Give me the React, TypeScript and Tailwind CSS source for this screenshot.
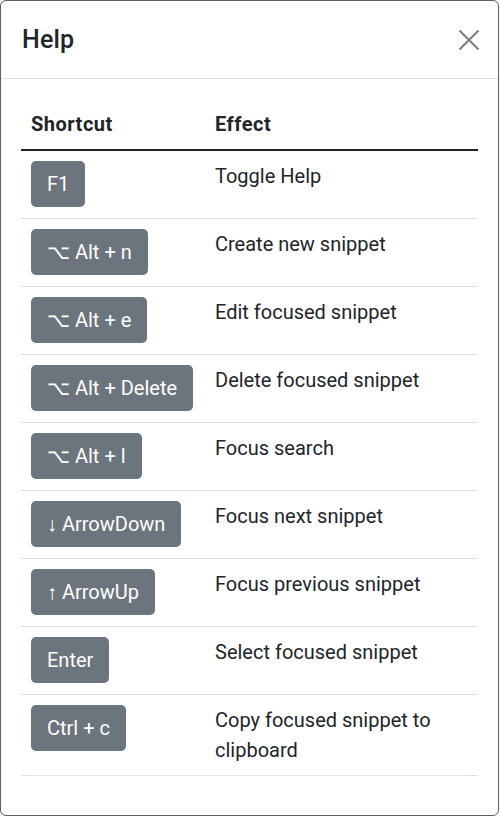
import React from 'react';

const shortcuts: { keys: string; effect: string }[] = [
  { keys: 'F1', effect: 'Toggle Help' },
  { keys: '⌥ Alt + n', effect: 'Create new snippet' },
  { keys: '⌥ Alt + e', effect: 'Edit focused snippet' },
  { keys: '⌥ Alt + Delete', effect: 'Delete focused snippet' },
  { keys: '⌥ Alt + l', effect: 'Focus search' },
  { keys: '↓ ArrowDown', effect: 'Focus next snippet' },
  { keys: '↑ ArrowUp', effect: 'Focus previous snippet' },
  { keys: 'Enter', effect: 'Select focused snippet' },
  { keys: 'Ctrl + c', effect: 'Copy focused snippet to clipboard' },
];

export default function App() {
  return (
    <div
      className="w-[499px] h-[816px] bg-white text-[#212529] border border-[#5f5f5f] rounded-md overflow-hidden flex flex-col"
      style={{ fontFamily: 'Roboto, "Noto Sans", sans-serif' }}
    >
      <div className="flex items-center justify-between h-[78px] border-b border-[#dee2e6] pl-[21px] pr-[17px]">
        <h5 className="text-[25px] leading-[36px] font-medium tracking-[0.2px]">Help</h5>
        <button className="w-[24px] h-[24px] flex items-center justify-center text-[#808080]" aria-label="Close">
          <svg width="22" height="22" viewBox="0 0 22 22" fill="none" stroke="currentColor" strokeWidth="2.2">
            <path d="M1.5 1.5 L20.5 20.5 M20.5 1.5 L1.5 20.5" />
          </svg>
        </button>
      </div>

      <div className="px-[20px] pt-[20px]">
        <table className="w-full border-collapse text-[20px] leading-[30px]">
          <thead>
            <tr className="border-b-2 border-[#212529]">
              <th className="w-[184px] text-left font-bold tracking-[0.5px] px-[10px] pt-[10px] pb-[10px] align-top">Shortcut</th>
              <th className="text-left font-bold tracking-[0.5px] px-[10px] pt-[10px] pb-[10px] align-top">Effect</th>
            </tr>
          </thead>
          <tbody>
            {shortcuts.map((s) => (
              <tr key={s.keys} className="border-b border-[#dee2e6]">
                <td className="px-[10px] pt-[10px] pb-[11px] align-top">
                  <span className="inline-flex items-center h-[46px] px-[16px] rounded-[5px] bg-[#6c757d] text-white whitespace-nowrap">
                    {s.keys}
                  </span>
                </td>
                <td className="px-[10px] pt-[10px] pb-[10px] align-top">{s.effect}</td>
              </tr>
            ))}
          </tbody>
        </table>
      </div>
    </div>
  );
}
